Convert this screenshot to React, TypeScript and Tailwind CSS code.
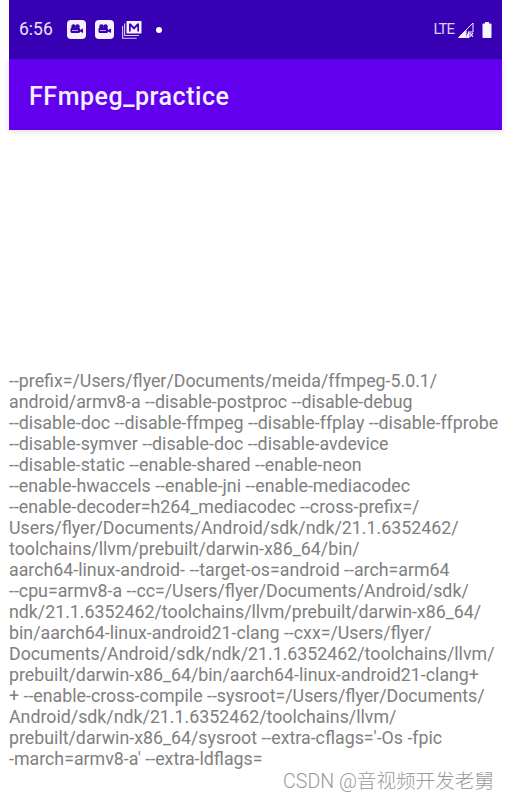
const lines = [
  "--prefix=/Users/flyer/Documents/meida/ffmpeg-5.0.1/",
  "android/armv8-a --disable-postproc --disable-debug",
  "--disable-doc --disable-ffmpeg --disable-ffplay --disable-ffprobe",
  "--disable-symver --disable-doc --disable-avdevice",
  "--disable-static --enable-shared --enable-neon",
  "--enable-hwaccels --enable-jni --enable-mediacodec",
  "--enable-decoder=h264_mediacodec --cross-prefix=/",
  "Users/flyer/Documents/Android/sdk/ndk/21.1.6352462/",
  "toolchains/llvm/prebuilt/darwin-x86_64/bin/",
  "aarch64-linux-android- --target-os=android --arch=arm64",
  "--cpu=armv8-a --cc=/Users/flyer/Documents/Android/sdk/",
  "ndk/21.1.6352462/toolchains/llvm/prebuilt/darwin-x86_64/",
  "bin/aarch64-linux-android21-clang --cxx=/Users/flyer/",
  "Documents/Android/sdk/ndk/21.1.6352462/toolchains/llvm/",
  "prebuilt/darwin-x86_64/bin/aarch64-linux-android21-clang+",
  "+ --enable-cross-compile --sysroot=/Users/flyer/Documents/",
  "Android/sdk/ndk/21.1.6352462/toolchains/llvm/",
  "prebuilt/darwin-x86_64/sysroot --extra-cflags='-Os -fpic",
  "-march=armv8-a' --extra-ldflags=",
];

function VideoBadge() {
  return (
    <svg width="19" height="19" viewBox="0 0 19 19">
      <rect x="0" y="0" width="19" height="19" rx="4" fill="#f4f0fc" />
      <rect x="3.5" y="7.5" width="9.5" height="5.5" rx="1.5" fill="#3700B3" />
      <circle cx="6.5" cy="6.5" r="2.2" fill="#3700B3" />
      <circle cx="10.5" cy="6.5" r="2.2" fill="#3700B3" />
      <path d="M13 10l3-1.5v4.5l-3-1.5z" fill="#3700B3" />
      <path d="M5 10.5h6" stroke="#b9a3e8" strokeWidth="1" />
    </svg>
  );
}

function MailStack() {
  return (
    <svg width="20" height="19" viewBox="0 0 20 19" fill="none">
      <rect x="4.5" y="1" width="15" height="12.5" fill="#f4f0fc" />
      <path d="M7 11.5V3.5h1.7l3.3 3.6 3.3-3.6H17v8h-1.7V6.2L12 9.7 8.7 6.2v5.3z" fill="#3700B3" />
      <path d="M2.6 3.5v12h14.4M0.6 6v12.3h14" stroke="#d9cdf3" strokeWidth="1.1" />
    </svg>
  );
}

function SignalIcon() {
  return (
    <svg width="16" height="16" viewBox="0 0 16 16" fill="none">
      <path d="M0.5 15.5L15 1v9h-4v5.5z" stroke="#f4f0fc" strokeWidth="1" />
      <path d="M0.5 15.5L8.5 7.5v8z" fill="#f4f0fc" />
      <path d="M8 15.5L11 8v7.5z" fill="#f4f0fc" />
      <path d="M11.7 11l3.3 3.8M15 11l-3.3 3.8" stroke="#e4dbf7" strokeWidth="1.2" />
    </svg>
  );
}

function BatteryIcon() {
  return (
    <svg width="10" height="16" viewBox="0 0 10 16">
      <path d="M3 0h4v1.5h1.5a1 1 0 0 1 1 1V15a1 1 0 0 1-1 1h-7a1 1 0 0 1-1-1V2.5a1 1 0 0 1 1-1H3z" fill="#f8f5fe" />
    </svg>
  );
}

export default function App() {
  return (
    <div className="relative h-[801px] w-[507px] overflow-hidden bg-white pl-[9px] pr-[5px] font-['Roboto',sans-serif]">
      <div className="flex h-[59px] items-center justify-between bg-[#3700B3] pl-[10px] pr-[10px] text-white">
        <div className="flex items-center">
          <span className="text-[17.5px] leading-none text-[#e9e0fa]">6:56</span>
          <div className="ml-[14px] flex items-center gap-[9px]">
            <VideoBadge />
            <VideoBadge />
            <div className="-ml-[1px]">
              <MailStack />
            </div>
          </div>
          <span className="ml-[14px] h-[6px] w-[6px] rounded-full bg-white" />
        </div>
        <div className="flex items-center">
          <span className="text-[15px] leading-none tracking-[-1px] text-[#d9cdf3]">LTE</span>
          <div className="ml-[4px]">
            <SignalIcon />
          </div>
          <div className="ml-[8px]">
            <BatteryIcon />
          </div>
        </div>
      </div>
      <div className="flex h-[71px] items-center bg-[#6200EE] pl-[20px] pt-[3px] shadow-[0_2px_6px_rgba(0,0,0,0.12)]">
        <h1 className="text-[25px] font-medium leading-none tracking-[0.55px] text-[#f5f0fe]">FFmpeg_practice</h1>
      </div>
      <div className="pt-[240px] text-[17.8px] leading-[21px] text-[#808080]">
        {lines.map((line) => (
          <div key={line} className="whitespace-nowrap">
            {line}
          </div>
        ))}
      </div>
      <div className="absolute bottom-[8px] right-[13px] font-['Roboto','Noto_Sans_CJK_SC',sans-serif] text-[19.6px] font-light leading-[22px] text-[#9a9a9a]">
        CSDN @音视频开发老舅
      </div>
    </div>
  );
}
